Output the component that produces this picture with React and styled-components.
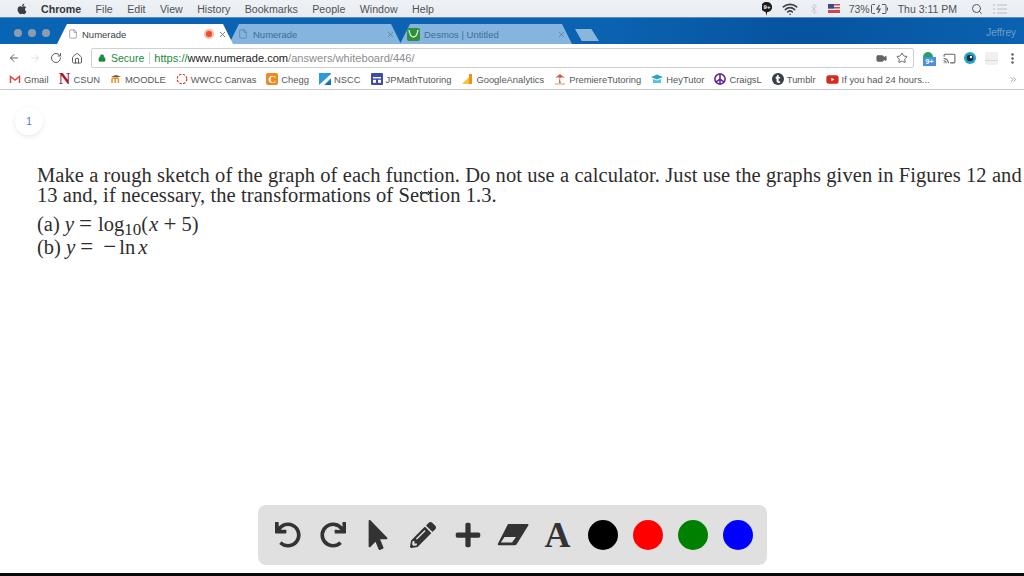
import React from 'react';
import styled, { createGlobalStyle } from 'styled-components';
import { ArrowLeft, ArrowRight, RotateCw, House, Lock, Video, Star, Cast, Wifi, Search, X, File, Bluetooth, ChevronsRight } from 'lucide-react';
import { FaApple, FaPeace, FaTumblr, FaYoutube, FaUndo, FaRedo, FaMousePointer, FaPencilAlt, FaPlus } from 'react-icons/fa';

const GlobalStyle = createGlobalStyle`
    html, body {
        margin: 0;
        padding: 0;
        background: #fff;
    }
    body {
        font-family: "Liberation Sans", Arial, sans-serif;
    }
`;

const Screen = styled.div`
    width: 1024px;
    height: 576px;
    display: flex;
    flex-direction: column;
    overflow: hidden;
    background: #fff;
`;

/* mac menu bar */
const MenuBar = styled.div`
    height: 17px;
    flex: none;
    display: flex;
    align-items: center;
    padding: 0 16px;
    background: linear-gradient(180deg, #eef1f5, #e8ecf1);
    color: #4a4d52;
    font-size: 10.5px;
`;

const MenuList = styled.div`
    display: flex;
    align-items: center;
    gap: 14.4px;
    margin-left: 13px;
    font-size: 10.65px;
`;

const MenuItem = styled.span`
    font-weight: ${(p) => (p.$bold ? 700 : 400)};
    color: ${(p) => (p.$bold ? '#33363a' : '#4f5358')};
`;

const StatusArea = styled.div`
    margin-left: auto;
    display: flex;
    align-items: center;
    color: #4f5358;
`;

const StatusSlot = styled.span`
    display: flex;
    align-items: center;
    margin-right: ${(p) => p.$gap}px;
`;

const TabStrip = styled.div`
    height: 27px;
    flex: none;
    display: flex;
    align-items: flex-end;
    padding-left: 14px;
    background: linear-gradient(90deg, #0a64b4 0%, #0b62b0 60%, #06539f 78%, #0a62b0 100%);
    border-top: 1px solid #5b8dbb;
    box-sizing: border-box;
`;

const WindowDots = styled.div`
    align-self: center;
    display: flex;
    gap: 6px;
    width: 43px;
    margin-top: 3px;
`;

const WindowDot = styled.i`
    width: 8px;
    height: 8px;
    border-radius: 50%;
    background: #8d9cad;
`;

const Tab = styled.div`
    position: relative;
    z-index: ${(p) => (p.$active ? 2 : 1)};
    width: ${(p) => p.$width}px;
    height: 20px;
    margin-left: ${(p) => p.$offset}px;
    padding: 0 6px 0 ${(p) => p.$pad}px;
    box-sizing: border-box;
    display: flex;
    align-items: center;
    background: ${(p) => (p.$active ? '#fff' : '#85b5de')};
    color: ${(p) => (p.$active ? '#3c4043' : '#3f6d94')};
    font-size: 9.5px;
    clip-path: polygon(10px 0, calc(100% - 10px) 0, 100% 100%, 0 100%);
`;

const TabTitle = styled.span`
    margin-left: ${(p) => p.$gap}px;
    flex: 1;
`;

const RecordDot = styled.i`
    width: 6px;
    height: 6px;
    margin-right: 6px;
    border-radius: 50%;
    background: #ee4b2b;
    box-shadow: 0 0 0 2px #f7b9a8;
`;

const NewTab = styled.div`
    width: 24px;
    height: 12px;
    margin: 0 0 3px 3px;
    background: #8bb6dc;
    clip-path: polygon(0 0, 68% 0, 100% 100%, 28% 100%);
`;

const Profile = styled.span`
    margin: 0 8px 6px auto;
    align-self: flex-end;
    color: #6f9fca;
    font-size: 10px;
`;

const NavBar = styled.div`
    height: 24px;
    flex: none;
    box-sizing: border-box;
    display: flex;
    align-items: center;
    padding: 4px 0 0 8px;
    background: #fff;
`;

const NavIcon = styled.span`
    width: 12px;
    margin-right: 9px;
    display: flex;
    justify-content: center;
    color: ${(p) => p.$color || '#5d6063'};
`;

const Omnibox = styled.div`
    width: 823px;
    height: 20px;
    margin-left: -1px;
    box-sizing: border-box;
    padding: 0 5px 0 6px;
    display: flex;
    align-items: center;
    border: 1px solid #cfd1d3;
    border-radius: 2px;
    font-size: 10.5px;
`;

const Secure = styled.span`
    color: #1a8a3c;
    margin-left: 5px;
`;

const Divider = styled.i`
    width: 1px;
    height: 12px;
    margin: 0 4px 0 5px;
    background: #cfd1d3;
`;

const Url = styled.span`
    color: #8a8d90;
    flex: 1;
    font-size: 11.1px;
`;

const UrlScheme = styled.span`
    color: #1a8a3c;
`;

const UrlHost = styled.span`
    color: #222;
`;

const OmniActions = styled.div`
    display: flex;
    align-items: center;
    gap: 9px;
    color: #606468;
`;

const Extensions = styled.div`
    display: flex;
    align-items: center;
    margin-left: 8px;
`;

const ExtSlot = styled.span`
    display: flex;
    margin-right: ${(p) => p.$gap}px;
`;

const BookmarkBar = styled.div`
    height: 22px;
    flex: none;
    box-sizing: border-box;
    display: flex;
    align-items: center;
    padding: 1px 6px 0 9px;
    gap: 10px;
    border-bottom: 1px solid #c6c9cc;
    background: #fff;
`;

const Bookmark = styled.div`
    display: flex;
    align-items: center;
    gap: 3px;
    color: #54585c;
    font-size: 9.4px;
    white-space: nowrap;
`;

const MoreBookmarks = styled.span`
    margin-left: auto;
    display: flex;
    color: #808488;
`;

const FaviconText = styled.span`
    width: 12px;
    height: 12px;
    display: flex;
    align-items: center;
    justify-content: center;
    font-family: "Liberation Serif", serif;
    font-weight: 700;
    font-size: ${(p) => p.$size || 16}px;
    color: ${(p) => p.$color};
    background: ${(p) => p.$bg || 'none'};
    border-radius: 2px;
`;

const TumblrDisc = styled.span`
    width: 12px;
    height: 12px;
    display: flex;
    align-items: center;
    justify-content: center;
    border-radius: 50%;
    background: #3a3f48;
    color: #fff;
`;

const Page = styled.main`
    flex: 1;
    min-height: 0;
    display: flex;
    flex-direction: column;
    background: #fff;
`;

const PageBadge = styled.div`
    width: 28px;
    height: 28px;
    margin: 17px 0 0 15px;
    display: flex;
    align-items: center;
    justify-content: center;
    border-radius: 50%;
    color: #5f6bc4;
    font-size: 10px;
    box-shadow: 0 2px 5px rgba(0, 0, 0, 0.09);
`;

const Problem = styled.section`
    margin: 30px 0 0 37px;
    width: 990px;
    font-family: "Liberation Serif", serif;
    color: #2d2d2d;
`;

const Statement = styled.p`
    margin: 0;
    position: relative;
    font-size: 20.5px;
    line-height: 20px;
    letter-spacing: 0.08px;
`;

const Parts = styled.div`
    margin-top: 8px;
    font-size: 20.5px;
    line-height: 23px;
`;

const Part = styled.div`
    display: flex;
    align-items: baseline;
    white-space: nowrap;
`;

const MathVar = styled.i`
    font-size: 21px;
    margin-left: ${(p) => p.$left || 0}px;
`;

const MathOp = styled.span`
    font-size: 23px;
    line-height: 20px;
    margin: 0 ${(p) => p.$right}px 0 ${(p) => p.$left}px;
`;

const Sub = styled.span`
    font-size: 17px;
    line-height: 10px;
    transform: translateY(4px);
`;

const Caret = styled.svg`
    position: absolute;
    left: 383px;
    top: 25px;
`;

const Palette = styled.div`
    margin: auto 0 8px 258px;
    width: 509px;
    height: 60px;
    box-sizing: border-box;
    padding: 0 7px;
    display: flex;
    align-items: center;
    background: #e0e0e0;
    border-radius: 8px;
`;

const Tool = styled.button`
    width: 45px;
    height: 45px;
    padding: 0;
    border: none;
    background: none;
    display: flex;
    align-items: center;
    justify-content: center;
    color: #333;
`;

const FontTool = styled(Tool)`
    font-family: "Liberation Serif", serif;
    font-weight: 700;
    font-size: 36px;
`;

const Swatch = styled.i`
    width: 30px;
    height: 30px;
    border-radius: 50%;
    background: ${(p) => p.$color};
`;

const BottomEdge = styled.div`
    height: 3px;
    flex: none;
    background: #0a0a0a;
`;

const FileIcon = ({ color }) => <File size={10} color={color} strokeWidth={1.3} />;

const GmailIcon = () => (
    <svg width="12" height="12" viewBox="0 0 12 12">
        <path d="M1.500 10V3.500L6 7 10.500 3.500V10" fill="none" stroke="#d8473d" strokeWidth="1.500" />
    </svg>
);

const MoodleIcon = () => (
    <svg width="12" height="12" viewBox="0 0 12 12">
        <path d="M1 3.5 6 2l5 1.5-5 1z" fill="#7a5a3a" />
        <path d="M2 10V6.5a1.6 1.6 0 0 1 3.2 0V10M5.2 10V6.5a1.6 1.6 0 0 1 3.2 0V10" fill="none" stroke="#e9912c" strokeWidth="1.5" />
    </svg>
);

const CanvasIcon = () => (
    <svg width="12" height="12" viewBox="0 0 12 12">
        <circle cx="6" cy="6" r="4.8" fill="none" stroke="#d5392c" strokeWidth="1.2" strokeDasharray="2.4 1.4" />
    </svg>
);

const NsccIcon = () => (
    <svg width="12" height="12" viewBox="0 0 12 12">
        <rect width="12" height="12" fill="#2d9bd6" />
        <path d="M0 12 12 1v4L5 12z" fill="#fff" />
        <path d="M6 12l6-5v5z" fill="#176da3" />
    </svg>
);

const CalendarIcon = () => (
    <svg width="12" height="12" viewBox="0 0 12 12">
        <rect width="12" height="12" rx="1" fill="#3f4ba8" />
        <rect x="2" y="4" width="8" height="1.4" fill="#fff" />
        <rect x="2" y="6.8" width="3" height="3" fill="#fff" />
        <rect x="7" y="6.8" width="3" height="3" fill="#fff" />
    </svg>
);

const AnalyticsIcon = () => (
    <svg width="12" height="12" viewBox="0 0 12 12">
        <path d="M1 11 8 4v7z" fill="#f6c33b" />
        <rect x="8" y="1" width="3" height="10" fill="#ef8f1d" />
    </svg>
);

const PalmIcon = () => (
    <svg width="12" height="12" viewBox="0 0 12 12">
        <path d="M1 5 6 1l5 4-3-.8-2 1-2-1z" fill="#e2583e" />
        <path d="M5.5 4.5 7 11H5z" fill="#8a6a4a" />
        <rect x="1" y="10" width="10" height="2" fill="#f4c9a0" />
    </svg>
);

const HeyTutorIcon = () => (
    <svg width="12" height="12" viewBox="0 0 12 12">
        <path d="M0 4 6 1.5 12 4 6 6.5z" fill="#23a6c9" />
        <path d="M2 6v4h8V6L6 7.5z" fill="#5cc2de" />
    </svg>
);

const DesmosIcon = () => (
    <svg width="13" height="13" viewBox="0 0 13 13">
        <rect width="13" height="13" rx="2" fill="#2f8f3a" />
        <path d="M2 2c1 6 2.5 7 4.5 7S10 8 11 2" fill="none" stroke="#d8f0d8" strokeWidth="1.4" />
    </svg>
);

const ChatBadge = () => (
    <svg width="10" height="14" viewBox="0 0 10 14">
        <path d="M5 0a5 5 0 0 1 0 10.2L5 14l-1.500-4A5 5 0 0 1 5 0z" fill="#1c1c1c" />
        <text x="5" y="7" textAnchor="middle" fontSize="6" fontWeight="700" fill="#fff">9+</text>
    </svg>
);

const Flag = () => (
    <svg width="12" height="9" viewBox="0 0 12 9">
        <rect width="12" height="9" fill="#c9474e" />
        <rect y="1.500" width="12" height="1.500" fill="#f2f2f2" />
        <rect y="4.500" width="12" height="1.500" fill="#f2f2f2" />
        <rect width="6" height="4.500" fill="#3a4a8c" />
    </svg>
);

const Battery = () => (
    <svg width="17" height="10" viewBox="0 0 17 10" fill="none" stroke="#55595e">
        <path d="M4 .5H1.500a1 1 0 0 0-1 1v7a1 1 0 0 0 1 1H4M11 .5h3a1 1 0 0 1 1 1v7a1 1 0 0 1-1 1h-3" />
        <path d="M8.500 1 6 5.200h3L7 9" strokeWidth="1.300" />
        <path d="M16.500 3.500v3" />
    </svg>
);

const ListLines = () => (
    <svg width="14" height="10" viewBox="0 0 14 10" stroke="#b9bdc2">
        <path d="M0 1h2M4 1h10M0 5h2M4 5h10M0 9h2M4 9h10" />
    </svg>
);

const ExtensionDrive = () => (
    <svg width="14" height="16" viewBox="0 0 14 16">
        <path d="M1 7a5 5 0 0 1 10 0z" fill="#1fa463" />
        <rect x="1" y="7" width="13" height="9" fill="#4a90e2" />
        <text x="7.500" y="14" textAnchor="middle" fontSize="7" fontWeight="700" fill="#fff">9+</text>
    </svg>
);

const ExtensionEye = () => (
    <svg width="12" height="12" viewBox="0 0 12 12">
        <circle cx="6" cy="6" r="6" fill="#22a6c4" />
        <circle cx="6" cy="6" r="3.300" fill="#1d2b3a" />
        <circle cx="7" cy="5" r="1.200" fill="#fff" />
    </svg>
);

const ExtensionPale = () => (
    <svg width="13" height="13" viewBox="0 0 13 13">
        <rect width="13" height="13" rx="2" fill="#eef0f2" />
        <rect y="8" width="13" height="1" fill="#d6d8da" />
    </svg>
);

const MoreDots = () => (
    <svg width="3" height="11" viewBox="0 0 3 11" fill="#55595d">
        <circle cx="1.500" cy="1.500" r="1.200" />
        <circle cx="1.500" cy="5.500" r="1.200" />
        <circle cx="1.500" cy="9.500" r="1.200" />
    </svg>
);

const EraserIcon = () => (
    <svg width="32" height="24" viewBox="0 0 32 24">
        <path d="M11 1h19.500a1 1 0 0 1 .8 1.600L19.500 21.500a2 2 0 0 1-1.600.8H2a1.200 1.200 0 0 1-1-1.900z" fill="#333" />
        <path d="M7.500 14h11.500l-4 5.500H3.800z" fill="#e0e0e0" />
    </svg>
);

const bookmarks = [
    { label: 'Gmail', icon: <GmailIcon /> },
    { label: 'CSUN', icon: <FaviconText $color="#a3122a">N</FaviconText> },
    { label: 'MOODLE', icon: <MoodleIcon /> },
    { label: 'WWCC Canvas', icon: <CanvasIcon /> },
    { label: 'Chegg', icon: <FaviconText $color="#fff" $bg="#ee8a1f" $size={11}>C</FaviconText> },
    { label: 'NSCC', icon: <NsccIcon /> },
    { label: 'JPMathTutoring', icon: <CalendarIcon /> },
    { label: 'GoogleAnalytics', icon: <AnalyticsIcon /> },
    { label: 'PremiereTutoring', icon: <PalmIcon /> },
    { label: 'HeyTutor', icon: <HeyTutorIcon /> },
    { label: 'CraigsL', icon: <FaPeace size={12} color="#5b1e96" /> },
    { label: 'Tumblr', icon: <TumblrDisc><FaTumblr size={8} /></TumblrDisc> },
    { label: 'If you had 24 hours...', icon: <FaYoutube size={13} color="#d9281e" /> },
];

const menus = ['File', 'Edit', 'View', 'History', 'Bookmarks', 'People', 'Window', 'Help'];
const swatches = ['#000', '#f00', '#008000', '#00f'];

export default function App() {
    return (
        <Screen>
            <GlobalStyle />
            <MenuBar>
                <FaApple size={12} color="#3b3e42" />
                <MenuList>
                    <MenuItem $bold>Chrome</MenuItem>
                    {menus.map((m) => <MenuItem key={m}>{m}</MenuItem>)}
                </MenuList>
                <StatusArea>
                    <StatusSlot $gap={10}><ChatBadge /></StatusSlot>
                    <StatusSlot $gap={10}><Wifi size={16} color="#3d4044" strokeWidth={2.4} /></StatusSlot>
                    <StatusSlot $gap={8}><Bluetooth size={12} color="#c9cdd2" /></StatusSlot>
                    <StatusSlot $gap={9}><Flag /></StatusSlot>
                    <StatusSlot $gap={1}>73%</StatusSlot>
                    <StatusSlot $gap={10}><Battery /></StatusSlot>
                    <StatusSlot $gap={14}>Thu 3:11 PM</StatusSlot>
                    <StatusSlot $gap={10}><Search size={12} color="#55595e" /></StatusSlot>
                    <StatusSlot $gap={1}><ListLines /></StatusSlot>
                </StatusArea>
            </MenuBar>
            <TabStrip>
                <WindowDots>
                    <WindowDot /><WindowDot /><WindowDot />
                </WindowDots>
                <Tab $active $width={176} $offset={0} $pad={11}>
                    <FileIcon color="#5f6368" />
                    <TabTitle $gap={4}>Numerade</TabTitle>
                    <RecordDot />
                    <X size={9} color="#55595d" />
                </Tab>
                <Tab $width={172} $offset={-4} $pad={9}>
                    <FileIcon color="#3f6d94" />
                    <TabTitle $gap={5}>Numerade</TabTitle>
                    <X size={9} color="#4f7ca3" />
                </Tab>
                <Tab $width={172} $offset={-1} $pad={7}>
                    <DesmosIcon />
                    <TabTitle $gap={4}>Desmos | Untitled</TabTitle>
                    <X size={9} color="#4f7ca3" />
                </Tab>
                <NewTab />
                <Profile>Jeffrey</Profile>
            </TabStrip>
            <NavBar>
                <NavIcon><ArrowLeft size={14} /></NavIcon>
                <NavIcon $color="#dfe1e3"><ArrowRight size={14} /></NavIcon>
                <NavIcon><RotateCw size={12} /></NavIcon>
                <NavIcon><House size={13} /></NavIcon>
                <Omnibox>
                    <Lock size={8} color="#1a8a3c" fill="#1a8a3c" />
                    <Secure>Secure</Secure>
                    <Divider />
                    <Url>
                        <UrlScheme>https://</UrlScheme>
                        <UrlHost>www.numerade.com</UrlHost>
                        /answers/whiteboard/446/
                    </Url>
                    <OmniActions>
                        <Video size={11} fill="#606468" />
                        <Star size={12} />
                    </OmniActions>
                </Omnibox>
                <Extensions>
                    <ExtSlot $gap={7}><ExtensionDrive /></ExtSlot>
                    <ExtSlot $gap={8}><Cast size={13} color="#606468" /></ExtSlot>
                    <ExtSlot $gap={9}><ExtensionEye /></ExtSlot>
                    <ExtSlot $gap={13}><ExtensionPale /></ExtSlot>
                    <ExtSlot $gap={0}><MoreDots /></ExtSlot>
                </Extensions>
            </NavBar>
            <BookmarkBar>
                {bookmarks.map((b) => (
                    <Bookmark key={b.label}>{b.icon}{b.label}</Bookmark>
                ))}
                <MoreBookmarks><ChevronsRight size={9} /></MoreBookmarks>
            </BookmarkBar>
            <Page>
                <PageBadge>1</PageBadge>
                <Problem>
                    <Statement>
                        Make a rough sketch of the graph of each function. Do not use a calculator. Just use the graphs given in Figures 12 and
                        13 and, if necessary, the transformations of Section 1.3.
                        <Caret width="10" height="6" viewBox="0 0 10 6">
                            <path d="M0 3h10M2 1 0 3l2 2M8 1l2 2-2 2" fill="none" stroke="#222" strokeWidth="1" />
                        </Caret>
                    </Statement>
                    <Parts>
                        <Part>
                            (a)<MathVar $left={5}>y</MathVar>
                            <MathOp $left={5} $right={6}>=</MathOp>
                            log<Sub>10</Sub>(<MathVar $left={1}>x</MathVar>
                            <MathOp $left={5} $right={5}>+</MathOp>
                            5)
                        </Part>
                        <Part>
                            (b)<MathVar $left={5}>y</MathVar>
                            <MathOp $left={5} $right={5}>=</MathOp>
                            <MathOp $left={5} $right={3}>−</MathOp>
                            ln<MathVar $left={3}>x</MathVar>
                        </Part>
                    </Parts>
                </Problem>
                <Palette>
                    <Tool><FaUndo size={26} /></Tool>
                    <Tool><FaRedo size={26} /></Tool>
                    <Tool><FaMousePointer size={30} /></Tool>
                    <Tool><FaPencilAlt size={26} /></Tool>
                    <Tool><FaPlus size={28} /></Tool>
                    <Tool><EraserIcon /></Tool>
                    <FontTool>A</FontTool>
                    {swatches.map((c) => <Tool key={c}><Swatch $color={c} /></Tool>)}
                </Palette>
                <BottomEdge />
            </Page>
        </Screen>
    );
}
